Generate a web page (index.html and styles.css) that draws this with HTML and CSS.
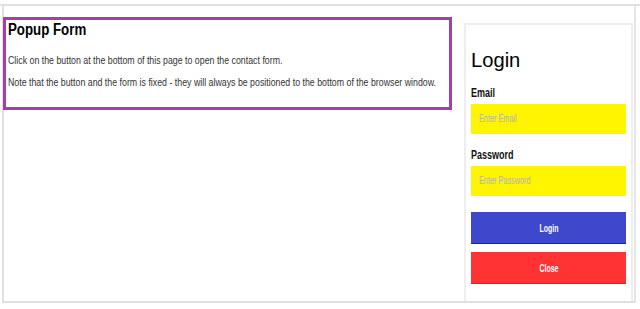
FILE: index.html
```html
<!DOCTYPE html>
<html>
<head>
<meta charset="utf-8">
<link rel="stylesheet" href="styles.css">
</head>
<body>
<div class="page">
  <div class="frame">
    <div class="intro">
      <h2 class="intro-title">Popup Form</h2>
      <p class="intro-text">Click on the button at the bottom of this page to open the contact form.</p>
      <p class="intro-text">Note that the button and the form is fixed - they will always be positioned to the bottom of the browser window.</p>
    </div>
    <div class="card">
      <h1 class="card-title">Login</h1>
      <label class="field-label">Email</label>
      <div class="field"><span class="placeholder">Enter Email</span></div>
      <label class="field-label">Password</label>
      <div class="field"><span class="placeholder">Enter Password</span></div>
      <div class="btn btn-login"><span class="btn-text">Login</span></div>
      <div class="btn btn-close"><span class="btn-text">Close</span></div>
    </div>
  </div>
</div>
</body>
</html>
```
FILE: styles.css
```css
html, body {
  margin: 0;
  padding: 0;
  background: #ffffff;
}
body {
  font-family: "Liberation Sans", Arial, sans-serif;
  width: 640px;
  height: 309px;
  overflow: hidden;
}
.page {
  margin-top: 4px;
  border-top: 2px solid #e0e0e0;
}
.frame {
  display: flex;
  align-items: stretch;
  gap: 12px;
  margin-left: 2px;
  width: 634px;
  height: 297px;
  border: 2px solid #e0e0e0;
  border-top: none;
  border-right-color: #e6e6e6;
  padding-top: 11px;
  box-sizing: border-box;
}
.intro {
  width: 449px;
  height: 93px;
  box-sizing: border-box;
  border: 3px solid #a23fa9;
  padding: 0 0 0 2px;
  margin-left: -1px;
  overflow: hidden;
}
.intro-title {
  margin: 1px 0 0 0;
  font-size: 16px;
  line-height: 18px;
  font-weight: bold;
  color: #000;
  transform: scaleX(0.83);
  transform-origin: left center;
  white-space: nowrap;
}
.intro-text {
  margin: 15px 0 0 0;
  font-size: 11px;
  line-height: 13px;
  color: #333;
  white-space: nowrap;
  transform: scaleX(0.8);
  transform-origin: left center;
}
.intro-text + .intro-text {
  margin-top: 9px;
}
.card {
  width: 169px;
  margin-top: 6px;
  box-sizing: border-box;
  border: 2px solid #eeeeee;
  border-bottom: none;
  padding: 0 5px 0 5px;
  display: flex;
  flex-direction: column;
}
.card-title {
  margin: 23px 0 0 0;
  font-size: 21px;
  line-height: 24px;
  font-weight: normal;
  color: #000;
  transform: scaleX(0.96);
  transform-origin: left center;
}
.field-label {
  margin-top: 14px;
  font-size: 12px;
  line-height: 14px;
  font-weight: bold;
  color: #111;
  transform: scaleX(0.75);
  transform-origin: left center;
}
.field {
  margin-top: 4px;
  height: 30px;
  background: #fff500;
  padding-left: 8px;
  display: flex;
  align-items: center;
}
.placeholder {
  display: inline-block;
  color: #b2b2b2;
  font-size: 10px;
  line-height: 12px;
  white-space: nowrap;
  transform: scaleX(0.73);
  transform-origin: left center;
}
.btn {
  height: 32px;
  line-height: 32px;
  text-align: center;
  color: #fff;
  font-size: 11px;
  font-weight: bold;
  box-sizing: border-box;
}
.btn-text {
  display: inline-block;
  transform: scaleX(0.63);
}
.btn-login {
  margin-top: 16px;
  background: #3f48cc;
  border-bottom: 1px solid #1a1ec0;
}
.btn-close {
  margin-top: 8px;
  background: #ff3333;
  border-bottom: 1px solid #f21b1b;
}
```
